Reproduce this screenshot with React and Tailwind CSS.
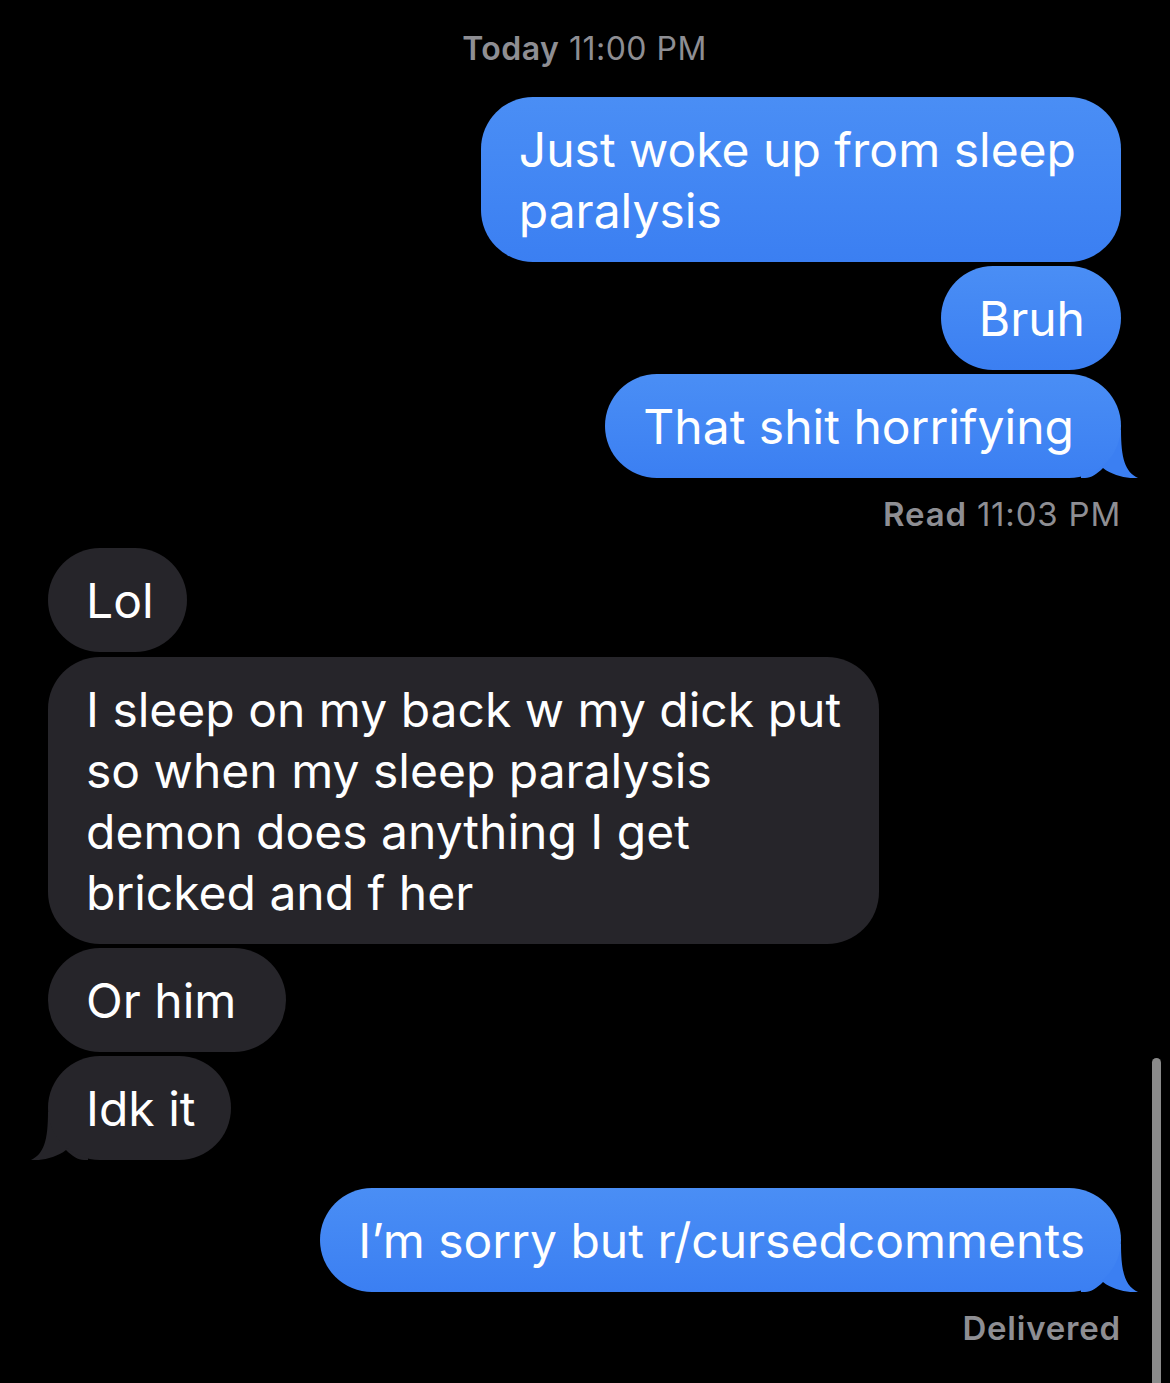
import React from "react";

const font = { fontFamily: "Inter, 'Noto Sans', sans-serif" };

function Tail({ side }) {
  if (side === "right") {
    return (
      <svg
        className="absolute right-[-17px] bottom-0 h-[50px] w-[57px]"
        viewBox="0 0 57 50"
      >
        <path
          d="M40 2 C40 30, 44 44, 57 50 C48 51, 32 48, 22 40 C16 46, 10 50, 4 50 L0 50 L0 2 Z"
          fill="#3b7ff2"
        />
      </svg>
    );
  }
  return (
    <svg
      className="absolute left-[-17px] bottom-0 h-[50px] w-[57px] -scale-x-100"
      viewBox="0 0 57 50"
    >
      <path
        d="M40 2 C40 30, 44 44, 57 50 C48 51, 32 48, 22 40 C16 46, 10 50, 4 50 L0 50 L0 2 Z"
        fill="#26252a"
      />
    </svg>
  );
}

function Sent({ lines, tail, className = "", pad = "pr-[38px]" }) {
  return (
    <div className={`relative self-end ${className}`}>
      <div
        className={`relative z-10 rounded-[52px] bg-gradient-to-b from-[#4a8ef5] to-[#3b7ff2] pl-[38px] ${pad} py-[21.5px] text-[48px] leading-[61px] text-white whitespace-nowrap`}
      >
        {lines.map((l) => (
          <div key={l}>{l}</div>
        ))}
      </div>
      {tail ? <Tail side="right" /> : null}
    </div>
  );
}

function Received({ lines, tail, className = "", pad = "pr-[38px]" }) {
  return (
    <div className={`relative self-start ${className}`}>
      <div
        className={`relative z-10 rounded-[52px] bg-[#26252a] pl-[38px] ${pad} py-[21.5px] text-[48px] leading-[61px] text-white whitespace-nowrap`}
      >
        {lines.map((l) => (
          <div key={l}>{l}</div>
        ))}
      </div>
      {tail ? <Tail side="left" /> : null}
    </div>
  );
}

export default function App() {
  return (
    <div
      className="relative h-[1383px] w-[1170px] overflow-hidden bg-black"
      style={font}
    >
      <div className="flex flex-col pl-[48px] pr-[49px] pt-[29px]">
        <div className="h-[40px] text-center text-[32px] leading-[40px] tracking-[0.5px] text-[#8e8e93]">
          <span className="font-semibold">Today</span> 11:00 PM
        </div>

        <Sent
          className="mt-[28px]"
          pad="pr-[45px]"
          lines={["Just woke up from sleep", "paralysis"]}
        />
        <Sent className="mt-[4px]" pad="pr-[36px]" lines={["Bruh"]} />
        <Sent
          className="mt-[4px]"
          pad="pr-[47px]"
          lines={["That shit horrifying"]}
          tail
        />

        <div className="mt-[16px] h-[40px] text-right text-[33px] leading-[40px] tracking-[0.8px] text-[#8e8e93]">
          <span className="font-semibold">Read</span> 11:03 PM
        </div>

        <Received className="mt-[14px]" pad="pr-[33px]" lines={["Lol"]} />
        <Received
          className="mt-[5px]"
          lines={[
            "I sleep on my back w my dick put",
            "so when my sleep paralysis",
            "demon does anything I get",
            "bricked and f her",
          ]}
        />
        <Received className="mt-[4px]" pad="pr-[50px]" lines={["Or him"]} />
        <Received className="mt-[4px]" pad="pr-[36px]" lines={["Idk it"]} tail />

        <Sent
          className="mt-[28px]"
          pad="pr-[36px]"
          lines={["I\u2019m sorry but r/cursedcomments"]}
          tail
        />

        <div className="mt-[16px] h-[40px] text-right text-[33px] font-semibold leading-[40px] tracking-[0.8px] text-[#8e8e93]">
          Delivered
        </div>
      </div>

      <div className="absolute left-[1152px] top-[1058px] h-[340px] w-[9px] rounded-full bg-[#8a8a8a]" />
    </div>
  );
}
